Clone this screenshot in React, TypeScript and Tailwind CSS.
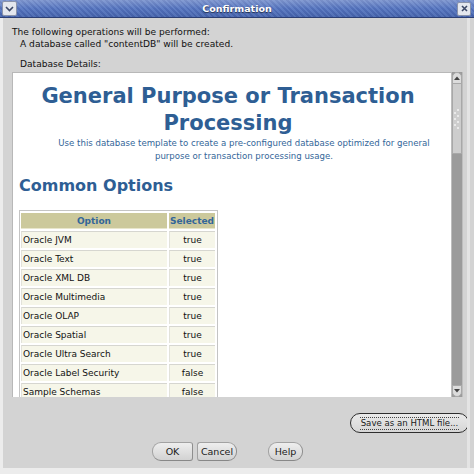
import React from "react";

const rows: [string, string][] = [
  ["Oracle JVM", "true"],
  ["Oracle Text", "true"],
  ["Oracle XML DB", "true"],
  ["Oracle Multimedia", "true"],
  ["Oracle OLAP", "true"],
  ["Oracle Spatial", "true"],
  ["Oracle Ultra Search", "true"],
  ["Oracle Label Security", "false"],
  ["Sample Schemas", "false"],
];

function TitleBar() {
  return (
    <div className="h-[18px] flex items-center relative border-b border-b-[#2c3f73] [background:linear-gradient(to_bottom,rgba(255,255,255,0.28),rgba(255,255,255,0.05)_50%,rgba(0,0,0,0.08)),repeating-linear-gradient(45deg,#5878c2_0px,#5878c2_2px,#4867b4_2px,#4867b4_4px)]">
      <div className="ml-[2px] w-[15px] h-[15px] bg-[#e4e7ee] border border-[#8a93aa] rounded-[2px] flex items-center justify-center">
        <svg width="9" height="6" viewBox="0 0 9 6">
          <path d="M1 1 L4.5 4.5 L8 1" fill="none" stroke="#3b4766" strokeWidth="1.6" />
        </svg>
      </div>
      <div className="flex-1 text-center text-white font-bold text-[9.5px] leading-[12px] [text-shadow:0_1px_1px_rgba(0,0,0,0.6)]">
        Confirmation
      </div>
      <div className="mr-[3px] w-[14px] h-[14px] bg-[#e4e7ee] border border-[#8a93aa] rounded-[2px] flex items-center justify-center">
        <svg width="7" height="7" viewBox="0 0 7 7">
          <path d="M1 1 L6 6 M6 1 L1 6" fill="none" stroke="#3b4766" strokeWidth="1.6" />
        </svg>
      </div>
    </div>
  );
}

function Scrollbar() {
  return (
    <div className="w-[12px] flex flex-col bg-[#9b9b9b] border-x border-x-[#bdbdbd]">
      <div className="h-[12px] rounded-t-[6px] bg-[#dcdcdc] border border-[#a8a8a8] flex items-center justify-center">
        <svg width="6" height="4" viewBox="0 0 6 4">
          <path d="M0 4 L3 0.5 L6 4 Z" fill="#444" />
        </svg>
      </div>
      <div className="h-[70px] bg-[#cdcdcd] border-x border-b border-[#a8a8a8] flex items-center justify-center">
        <svg width="8" height="22" viewBox="0 0 8 22">
          {[
            [5, 2], [2, 5], [5, 8], [2, 11], [5, 14], [2, 17], [5, 20],
          ].map(([x, y], i) => (
            <circle key={i} cx={x} cy={y} r="1" fill="#f2f2f2" />
          ))}
        </svg>
      </div>
      <div className="flex-1" />
      <div className="h-[12px] rounded-b-[6px] bg-[#dcdcdc] border border-[#a8a8a8] flex items-center justify-center">
        <svg width="6" height="4" viewBox="0 0 6 4">
          <path d="M0 0 L3 3.5 L6 0 Z" fill="#444" />
        </svg>
      </div>
    </div>
  );
}

function Panel() {
  return (
    <div className="mt-[2px] h-[325px] w-[451px] flex">
      <div className="w-[439px] bg-white overflow-hidden border-t border-l border-[#b8b8b8]">
        <div className="pt-[10px] pr-[8px] text-center font-bold text-[21px] leading-[27px] text-[#2e5e94]">
          General Purpose or Transaction
          <br />
          Processing
        </div>
        <div className="pl-[24px] text-center text-[8.6px] leading-[13px] text-[#336699]">
          Use this database template to create a pre-configured database optimized for general
          <br />
          purpose or transaction processing usage.
        </div>
        <div className="mt-[12px] pl-[6px] font-bold text-[16px] leading-[22px] text-[#2e5e94]">
          Common Options
        </div>
        <div className="mt-[13px] ml-[6px] w-[199px] border border-b-0 border-[#c4c4c4] pt-[2px] pl-[1px] pr-[2px]">
          <div className="grid grid-cols-[146px_46px] gap-[2px]">
            <div className="h-[16px] bg-[#ccc99c] border-b border-b-[#e8e6cc] flex items-center justify-center font-bold text-[9px] text-[#336699]">
              Option
            </div>
            <div className="h-[16px] bg-[#ccc99c] border-b border-b-[#e8e6cc] flex items-center justify-center font-bold text-[9px] text-[#336699]">
              Selected
            </div>
            {rows.map(([name, val]) => (
              <React.Fragment key={name}>
                <div className="h-[17px] bg-[#f6f6e9] border-t border-t-[#d6d6d0] border-l border-l-[#e2e2da] flex items-center pl-[1px] text-[9px] text-[#111]">
                  {name}
                </div>
                <div className="h-[17px] bg-[#f6f6e9] border-t border-t-[#d6d6d0] border-l border-l-[#e2e2da] flex items-center justify-center text-[9px] text-[#111]">
                  {val}
                </div>
              </React.Fragment>
            ))}
          </div>
        </div>
      </div>
      <Scrollbar />
    </div>
  );
}

function Btn({ children, w, shape }: { children: React.ReactNode; w: string; shape: string }) {
  return (
    <div
      className={`${w} ${shape} h-[19px] border border-[#a2a2a2] border-b-[#888] border-r-[#8e8e8e] bg-gradient-to-b from-[#eeeeee] to-[#d2d2d2] flex items-center justify-center text-[9.5px] text-[#1a1a1a]`}
    >
      {children}
    </div>
  );
}

export default function App() {
  return (
    <div className="w-[474px] h-[474px] overflow-hidden flex flex-col bg-[#d3d3d3] font-['DejaVu_Sans',sans-serif]">
      <TitleBar />
      <div className="flex-1 flex">
        <div className="w-[3px] bg-[#ececec]" />
        <div className="flex-1 flex flex-col pl-[9px] pt-[8px] text-[9.1px] leading-[12px] text-[#111]">
          <div className="h-[12px]">The following operations will be performed:</div>
          <div className="h-[12px] pl-[8px]">A database called "contentDB" will be created.</div>
          <div className="h-[12px] mt-[8px] pl-[8px]">Database Details:</div>
          <Panel />
          <div className="mt-[16px] h-[20px] flex justify-end -mr-[2px]">
            <div className="w-[119px] h-[20px] rounded-full border-[1.5px] border-[#2e2e2e] bg-gradient-to-b from-[#eaeaea] to-[#d6d6d6] flex items-center justify-center">
              <span className="border-y border-dotted border-[#444] leading-[11px] text-[8.6px] text-[#1a1a1a] px-[1px] whitespace-nowrap">
                Save as an HTML file...
              </span>
            </div>
          </div>
          <div className="mt-[9px] h-[19px] flex pl-[140px]">
            <Btn w="w-[41px]" shape="rounded-l-[9px] rounded-r-[3px]">OK</Btn>
            <div className="w-[4px]" />
            <Btn w="w-[40px]" shape="rounded-l-[3px] rounded-r-[9px]">Cancel</Btn>
            <div className="w-[31px]" />
            <Btn w="w-[35px]" shape="rounded-[9px]">Help</Btn>
          </div>
        </div>
        <div className="w-[3px] bg-[#e4e4e4] mr-[4px]" />
      </div>
      <div className="h-[6px] bg-[#ececec]" />
    </div>
  );
}
